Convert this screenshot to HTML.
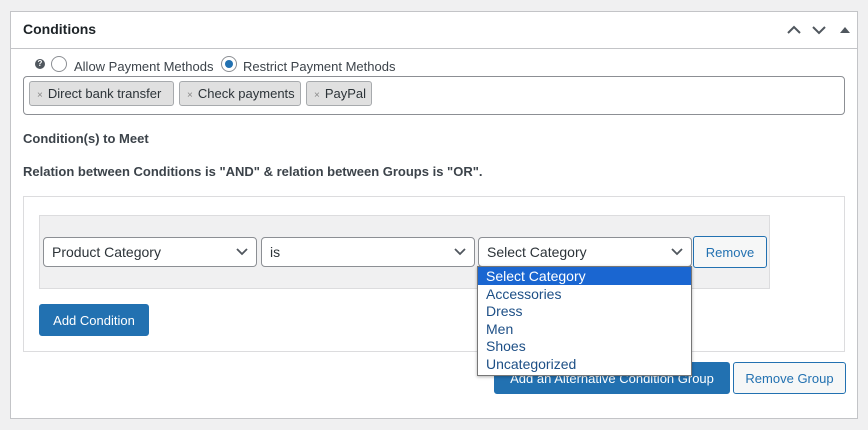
<!DOCTYPE html>
<html><head><style>
*{box-sizing:border-box;margin:0;padding:0}
body{width:868px;height:430px;background:#f0f0f1;font-family:"Liberation Sans",sans-serif;color:#3c434a;position:relative;overflow:hidden}
.a{position:absolute}
.panel{left:10px;top:11px;width:848px;height:408px;background:#fff;border:1px solid #c3c4c7}
.sel{height:30px;border:1px solid #8c8f94;border-radius:4px;background:#fff;font-size:14px;color:#2c3338;padding:6px 0 0 8px}
.sel svg{position:absolute;right:8px;top:10px}
.tag{top:81px;height:25px;background:#e0e0e0;border:1px solid #a7aaad;border-radius:3px;font-size:13px;color:#2c3338;padding:4px 0 0 7px}
.tag b{font-weight:normal;color:#888;font-size:10px;margin-right:5px}
.btn{border-radius:3px;font-size:13px;text-align:center;padding-top:8px}
.blue{background:#2271b1;color:#fff;border:1px solid #2271b1}
.wb{background:#f6f7f7;color:#2271b1;border:1px solid #2271b1}
.dd div{height:17.6px;font-size:14px;padding-left:8px;color:#1d4f86;line-height:19px}
</style></head><body>
<div class="a panel"></div>
<div class="a" style="left:10px;top:48px;width:848px;height:1px;background:#c3c4c7"></div>
<div class="a" style="left:23px;top:21px;font-size:14px;font-weight:bold;color:#1d2327">Conditions</div>
<svg class="a" style="left:786px;top:25px" width="16" height="10"><path d="M2 8 L8 2 L14 8" stroke="#50575e" stroke-width="2" fill="none"/></svg>
<svg class="a" style="left:811px;top:25px" width="16" height="10"><path d="M2 2 L8 8 L14 2" stroke="#50575e" stroke-width="2" fill="none"/></svg>
<svg class="a" style="left:840px;top:27px" width="10" height="7"><path d="M0 6 L5 0 L10 6Z" fill="#50575e"/></svg>
<div class="a" style="left:35px;top:59px;width:10px;height:10px;border-radius:50%;background:#50575e;color:#fff;font-size:8px;font-weight:bold;text-align:center;line-height:10px">?</div>
<div class="a" style="left:51px;top:56px;width:16px;height:16px;border-radius:50%;border:1px solid #8c8f94;background:#fff"></div>
<div class="a" style="left:74px;top:59px;font-size:13px">Allow Payment Methods</div>
<div class="a" style="left:221px;top:56px;width:16px;height:16px;border-radius:50%;border:1px solid #8c8f94;background:#fff"></div>
<div class="a" style="left:225px;top:60px;width:8px;height:8px;border-radius:50%;background:#2271b1"></div>
<div class="a" style="left:243px;top:59px;font-size:13px">Restrict Payment Methods</div>
<div class="a" style="left:23px;top:76px;width:822px;height:39px;border:1px solid #8c8f94;border-radius:4px;background:#fff"></div>
<div class="a tag" style="left:29px;width:145px"><b>×</b>Direct bank transfer</div>
<div class="a tag" style="left:179px;width:122px"><b>×</b>Check payments</div>
<div class="a tag" style="left:306px;width:66px"><b>×</b>PayPal</div>
<div class="a" style="left:23px;top:131px;font-size:13px;font-weight:bold">Condition(s) to Meet</div>
<div class="a" style="left:23px;top:164px;font-size:13px;font-weight:bold">Relation between Conditions is "AND" &amp; relation between Groups is "OR".</div>
<div class="a" style="left:23px;top:196px;width:822px;height:156px;border:1px solid #dcdcde"></div>
<div class="a" style="left:39px;top:215px;width:731px;height:74px;background:#f0f0f1;border:1px solid #dcdcde"></div>
<div class="a sel" style="left:43px;top:237px;width:214px">Product Category<svg width="12" height="8"><path d="M1 1 L6 6 L11 1" stroke="#50575e" stroke-width="1.8" fill="none"/></svg></div>
<div class="a sel" style="left:261px;top:237px;width:214px">is<svg width="12" height="8"><path d="M1 1 L6 6 L11 1" stroke="#50575e" stroke-width="1.8" fill="none"/></svg></div>
<div class="a sel" style="left:478px;top:237px;width:214px">Select Category<svg width="12" height="8"><path d="M1 1 L6 6 L11 1" stroke="#50575e" stroke-width="1.8" fill="none"/></svg></div>
<div class="a btn wb" style="left:693px;top:236px;width:74px;height:32px">Remove</div>
<div class="a btn blue" style="left:39px;top:304px;width:110px;height:32px">Add Condition</div>
<div class="a btn blue" style="left:494px;top:362px;width:236px;height:32px">Add an Alternative Condition Group</div>
<div class="a btn wb" style="left:733px;top:362px;width:113px;height:32px">Remove Group</div>
<div class="a dd" style="left:477px;top:266px;width:215px;height:110px;background:#fff;border:1px solid #767676;box-shadow:0 1px 3px rgba(0,0,0,.3)">
<div style="background:#1a66d1;color:#fff">Select Category</div>
<div>Accessories</div><div>Dress</div><div>Men</div><div>Shoes</div><div>Uncategorized</div>
</div>
</body></html>
